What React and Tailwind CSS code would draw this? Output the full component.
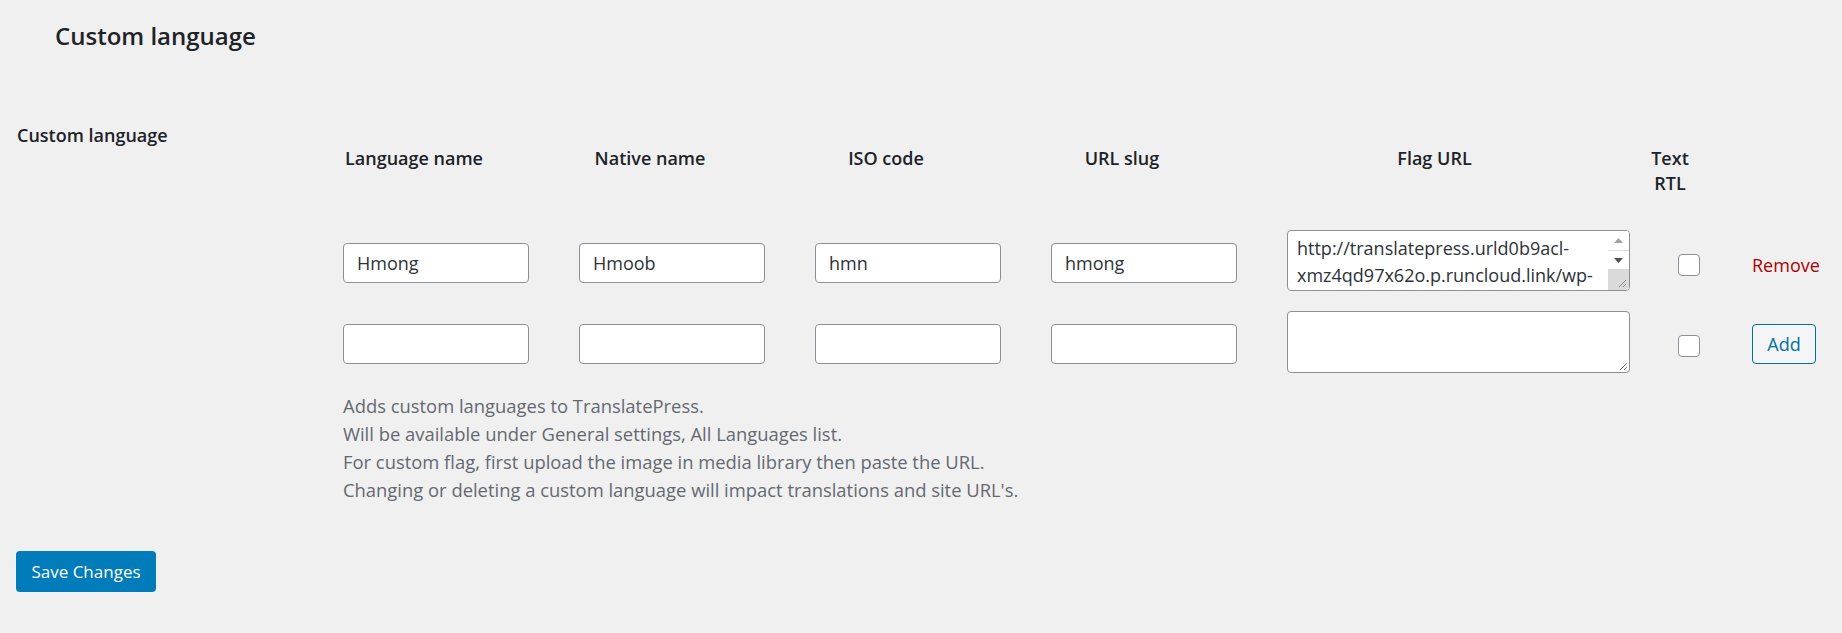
import { useState } from "react";

const flagUrl =
  "http://translatepress.urld0b9acl-xmz4qd97x62o.p.runcloud.link/wp-content/uploads/2021/03/hmong-flag.png";

function TextInput({ value = "" }) {
  return (
    <input
      type="text"
      defaultValue={value}
      className="h-[40px] w-[186px] rounded-[4px] border border-[#8c8f94] bg-white px-[13px] text-[18px] text-[#2c3338] outline-none"
    />
  );
}

function Checkbox() {
  return (
    <input
      type="checkbox"
      className="-ml-[2px] mt-[4px] h-[22px] w-[22px] appearance-none rounded-[4px] border border-[#8c8f94] bg-white"
    />
  );
}

function Grip() {
  return (
    <svg width="10" height="10" viewBox="0 0 10 10" className="absolute bottom-[2px] right-[2px]">
      <path d="M9 2 L2 9 M9 6 L6 9" stroke="#8a8a8a" strokeWidth="1" />
    </svg>
  );
}

export default function App() {
  const [rows] = useState([
    { name: "Hmong", native: "Hmoob", iso: "hmn", slug: "hmong", flag: flagUrl },
  ]);

  return (
    <div className="min-h-screen bg-[#f0f0f1] font-['Open_Sans',sans-serif] text-[#3c434a]">
      <h1 className="pl-[55px] pt-[20px] text-[24px] font-semibold leading-[32px] text-[#1d2327]">
        Custom language
      </h1>

      <div className="mt-[71px] flex">
        <div className="w-[327px] pl-[17px] text-[18px] font-semibold leading-[25px] text-[#1d2327]">
          Custom language
        </div>

        <div className="pl-[16px] pt-[23px]">
          <div className="grid grid-cols-[186px_186px_186px_186px_343px_22px_64px] items-center gap-x-[50px] gap-y-[15px]">
            {/* header row */}
            {["Language name", "Native name", "ISO code", "URL slug"].map((h) => (
              <div
                key={h}
                className="w-[142px] self-start whitespace-nowrap pb-[19px] text-center text-[18px] font-semibold leading-[25px] text-[#1d2327]"
              >
                {h}
              </div>
            ))}
            <div className="w-[295px] self-start pb-[19px] text-center text-[18px] font-semibold leading-[25px] text-[#1d2327]">
              Flag URL
            </div>
            <div className="-ml-[30px] w-[40px] self-start pb-[19px] text-center text-[18px] font-semibold leading-[25px] text-[#1d2327]">
              Text RTL
            </div>
            <div />

            {/* existing language */}
            {rows.map((r) => (
              <div key={r.iso} className="contents">
                <div className="flex h-[66px] items-center">
                  <TextInput value={r.name} />
                </div>
                <TextInput value={r.native} />
                <TextInput value={r.iso} />
                <TextInput value={r.slug} />
                <div className="relative h-[61px] w-[343px] self-start">
                  <textarea
                    readOnly
                    defaultValue={r.flag}
                    className="h-full w-full resize-none overflow-hidden rounded-[4px] border border-[#8c8f94] bg-white pl-[9px] pr-[24px] pt-[4px] text-[18px] leading-[27px] text-[#2c3338] outline-none"
                  />
                  {/* scrollbar */}
                  <div className="pointer-events-none absolute bottom-[1px] right-[1px] top-[1px] flex w-[21px] flex-col overflow-hidden rounded-r-[3px] bg-white">
                    <div className="flex h-[20px] items-center justify-center border-b border-[#dcdcdc]">
                      <svg width="9" height="5" viewBox="0 0 9 5">
                        <path d="M0 5 L4.5 0 L9 5z" fill="#a3a3a3" />
                      </svg>
                    </div>
                    <div className="flex h-[18px] items-center justify-center">
                      <svg width="9" height="5" viewBox="0 0 9 5">
                        <path d="M0 0 L4.5 5 L9 0z" fill="#505050" />
                      </svg>
                    </div>
                    <div className="relative flex-1 bg-[#dadada]">
                      <Grip />
                    </div>
                  </div>
                </div>
                <Checkbox />
                <a href="#" className="mt-[4px] text-[18px] text-[#aa0000]">
                  Remove
                </a>
              </div>
            ))}

            {/* new language */}
            <div className="flex h-[66px] items-center">
              <TextInput />
            </div>
            <TextInput />
            <TextInput />
            <TextInput />
            <div className="relative h-[62px] w-[343px] self-start">
              <textarea className="h-full w-full resize-none rounded-[4px] border border-[#8c8f94] bg-white pl-[9px] pt-[4px] text-[18px] leading-[27px] text-[#2c3338] outline-none" />
              <Grip />
            </div>
            <Checkbox />
            <button className="h-[40px] w-[64px] rounded-[4px] border border-[#0071a1] bg-[#f3f5f6] text-[18px] text-[#0071a1]">
              Add
            </button>
          </div>

          <p className="mt-[15px] text-[18.4px] leading-[28px] text-[#646970]">
            Adds custom languages to TranslatePress.
            <br />
            Will be available under General settings, All Languages list.
            <br />
            For custom flag, first upload the image in media library then paste the URL.
            <br />
            Changing or deleting a custom language will impact translations and site URL's.
          </p>
        </div>
      </div>

      <div className="mt-[47px] pl-[16px]">
        <button className="h-[41px] w-[140px] rounded-[4px] bg-[#007cba] text-[17px] text-white">
          Save Changes
        </button>
      </div>
    </div>
  );
}
